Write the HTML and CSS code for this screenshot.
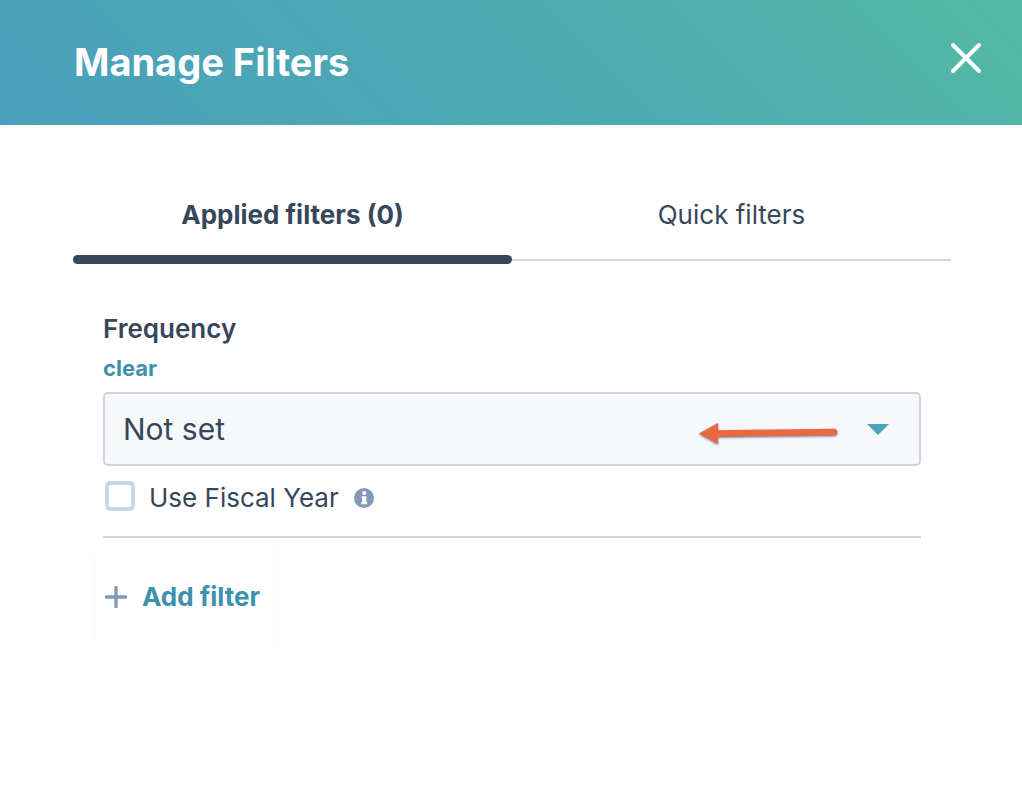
FILE: index.html
```html
<!DOCTYPE html>
<html lang="en">
<head>
<meta charset="utf-8">
<meta name="viewport" content="width=device-width, initial-scale=1">
<title>Manage Filters</title>
<link rel="stylesheet" href="styles.css">
</head>
<body>
<header class="header">
  <h1 class="title">Manage Filters</h1>
  <button class="close" type="button" aria-label="Close">
    <svg width="32" height="32" viewBox="0 0 32 32" aria-hidden="true"><path d="M3 3 29 29M29 3 3 29" stroke="#fff" stroke-width="4" stroke-linecap="round"/></svg>
  </button>
</header>
<main class="content">
  <div class="tabs" role="tablist">
    <button class="tab tab-active" type="button" role="tab" aria-selected="true">Applied filters (0)</button>
    <button class="tab" type="button" role="tab" aria-selected="false">Quick filters</button>
  </div>
  <section class="panel">
    <div class="filter">
      <label class="label" for="frequency">Frequency</label>
      <button class="clear" type="button">clear</button>
      <div class="select-wrap">
        <select class="select" id="frequency"><option>Not set</option></select>
        <svg class="caret" width="22" height="12" viewBox="0 0 22 12" aria-hidden="true"><path d="M0 0H22L11 11Z" fill="#4aa3ba"/></svg>
        <svg class="arrow" width="142" height="28" viewBox="0 0 142 28" aria-hidden="true">
          <g class="arrow-shape"><path d="M18 14.500 136 13" stroke="#ec6841" stroke-width="6.500" stroke-linecap="round"/><path d="M1 14.500 20 4V25Z" fill="#ec6841"/></g>
        </svg>
      </div>
      <div class="check-row">
        <input class="check" type="checkbox" id="fiscal">
        <label class="check-label" for="fiscal">Use Fiscal Year</label>
        <svg class="info" width="20" height="20" viewBox="0 0 20 20" aria-hidden="true"><circle cx="10" cy="10" r="10" fill="#8499b7"/><circle cx="10.300" cy="5" r="2.100" fill="#fff"/><path d="M7.500 8.300H12.400V14H13.200V16.300H7.300V14H8.300V10.300H7.500Z" fill="#fff"/></svg>
      </div>
    </div>
    <button class="add" type="button">
      <svg width="22" height="22" viewBox="0 0 22 22" aria-hidden="true"><path d="M11 1.500V20.500M1.500 11H20.500" stroke="#8499b7" stroke-width="3.400" stroke-linecap="round"/></svg>
      Add filter
    </button>
  </section>
</main>
</body>
</html>
```
FILE: styles.css
```css
* {
  box-sizing: border-box;
}

body {
  margin: 0;
  background: #fff;
  color: #36475b;
  font-family: Inter, "Liberation Sans", sans-serif;
  font-size: 26px;
}

button,
select {
  font: inherit;
  color: inherit;
}

button {
  padding: 0;
  border: 0;
  background: none;
  cursor: pointer;
}

svg {
  display: block;
  fill: none;
}

.header {
  display: flex;
  align-items: flex-start;
  justify-content: space-between;
  padding: 42px 40px 43px 74px;
  background: linear-gradient(45deg, #4a9fbc, #4ca7b5 35%, #50adb0 65%, #55b9a5);
  color: #fff;
}

.title {
  margin: 0;
  font-size: 38px;
  font-weight: 700;
  line-height: 40px;
}

.content {
  padding: 50px 71px 48px 73px;
}

.tabs {
  display: flex;
  background: linear-gradient(#cbd6e4, #cbd6e4) left 0 bottom 3px / 100% 2px no-repeat;
}

.tab {
  display: flex;
  flex: 1;
  flex-direction: column;
  align-items: center;
  justify-content: space-between;
  height: 89px;
  padding-top: 24px;
}

.tab-active {
  font-weight: 700;
}

.tab-active::after {
  content: "";
  width: 100%;
  height: 9px;
  border-radius: 5px;
  background: #36475b;
}

.panel {
  padding: 49px 30px 0;
}

.filter {
  display: flex;
  flex-direction: column;
  align-items: flex-start;
  padding-bottom: 21px;
  border-bottom: 2px solid #cbd6e4;
}

.label {
  font-weight: 600;
  line-height: 32px;
}

.clear {
  margin: 9px 0 10px;
  color: #3d91ad;
  font-size: 22px;
  font-weight: 700;
  line-height: 28px;
}

.select-wrap {
  position: relative;
  width: 100%;
}

.select {
  width: 100%;
  height: 74px;
  padding: 0 18px;
  border: 2px solid #cbd6e4;
  border-radius: 5px;
  background: #f6f8fa;
  font-size: 30px;
  appearance: none;
}

.caret {
  position: absolute;
  top: 32px;
  right: 32px;
  pointer-events: none;
}

.arrow {
  position: absolute;
  top: 27px;
  right: 81px;
  pointer-events: none;
}

.arrow-shape {
  filter: drop-shadow(0 1px 1px #667788);
}

.check-row {
  display: flex;
  align-items: flex-start;
  padding: 15px 0 0 2px;
}

.check {
  width: 30px;
  height: 30px;
  margin: 0 14px 0 0;
  border: 4px solid #cbd6e4;
  border-radius: 5px;
  background: #fff;
  appearance: none;
}

.check-label {
  line-height: 34px;
}

.info {
  align-self: center;
  margin-left: 15px;
}

.add {
  display: flex;
  align-items: center;
  gap: 15px;
  margin: 6px 0 0 -9px;
  padding: 36px 18px 36px 11px;
  background:
    linear-gradient(#fafafa, #fafafa) left center / 1px 80% no-repeat,
    linear-gradient(#fafafa, #fafafa) right / 1px 100% no-repeat;
  color: #3d91ad;
  font-weight: 700;
  line-height: 34px;
}
```
